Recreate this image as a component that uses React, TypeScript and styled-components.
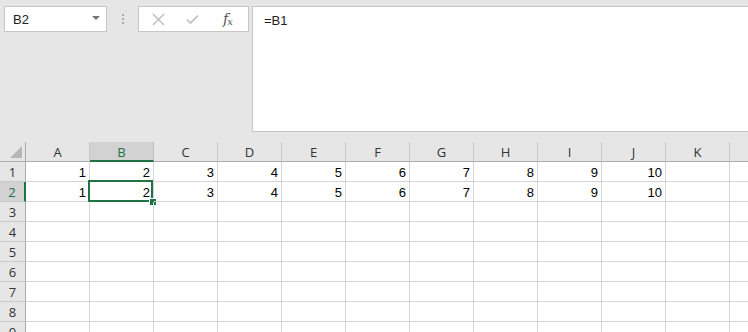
import React from 'react'
import styled, { createGlobalStyle } from 'styled-components'

const GREEN = '#217346'
const COLS = ['A', 'B', 'C', 'D', 'E', 'F', 'G', 'H', 'I', 'J', 'K', 'L']
const ROWS = 9
const data: Record<number, number[]> = {
    1: [1, 2, 3, 4, 5, 6, 7, 8, 9, 10],
    2: [1, 2, 3, 4, 5, 6, 7, 8, 9, 10],
}

const Global = createGlobalStyle`
    body {
        margin: 0;
        background: #fff;
        overflow: hidden;
        font-family: "Liberation Sans", Arial, sans-serif;
    }
`

const Page = styled.div`
    width: 748px;
    height: 332px;
    overflow: hidden;
    display: flex;
    flex-direction: column;
`

const Toolbar = styled.div`
    flex: 0 0 142px;
    background: #e6e6e6;
    display: flex;
    align-items: flex-start;
    padding: 6px 0 0 4px;
    box-sizing: border-box;
`

const NameBox = styled.div`
    width: 103px;
    height: 26px;
    box-sizing: border-box;
    background: #fff;
    border: 1px solid #c6c6c6;
    display: flex;
    align-items: center;
    justify-content: space-between;
    padding: 0 6px 0 8px;
    font-size: 13px;
    color: #222;
`

const Caret = styled.span`
    width: 0;
    height: 0;
    border-left: 4px solid transparent;
    border-right: 4px solid transparent;
    border-top: 4px solid #777;
    margin-top: -3px;
`

const Grip = styled.div`
    width: 31px;
    height: 26px;
    display: flex;
    flex-direction: column;
    align-items: center;
    justify-content: center;
    gap: 2px;
    & span {
        width: 2px;
        height: 2px;
        background: #ababab;
    }
`

const Buttons = styled.div`
    width: 111px;
    height: 26px;
    box-sizing: border-box;
    background: #fff;
    border: 1px solid #c6c6c6;
    display: flex;
    align-items: center;
    padding-left: 13px;
    gap: 21px;
`

const Fx = styled.span`
    font-family: "DejaVu Serif", "Liberation Serif", serif;
    font-style: italic;
    font-size: 14px;
    color: #555;
    margin-left: 3px;
    letter-spacing: -1px;
    & sub {
        font-size: 10px;
        vertical-align: -1px;
    }
`

const Formula = styled.div`
    flex: 1;
    height: 126px;
    margin-left: 3px;
    margin-right: -2px;
    box-sizing: border-box;
    background: #fff;
    border: 1px solid #c6c6c6;
    padding: 6px 0 0 11px;
    font-size: 13px;
    color: #222;
`

const Grid = styled.div`
    flex: 0 0 auto;
    display: grid;
    grid-template-columns: 26px repeat(${COLS.length}, 64px);
    grid-auto-rows: 20px;
    background: #fff;
`

const Corner = styled.div`
    background: #e6e6e6;
    border-right: 1px solid #ababab;
    border-bottom: 1px solid #ababab;
    box-sizing: border-box;
    position: relative;
    &::after {
        content: '';
        position: absolute;
        right: 3px;
        bottom: 3px;
        width: 0;
        height: 0;
        border-left: 12px solid transparent;
        border-bottom: 12px solid #b6b6b6;
    }
`

const ColHead = styled.div<{ $active?: boolean }>`
    background: ${p => (p.$active ? '#d2d2d2' : '#e6e6e6')};
    border-right: 1px solid ${p => (p.$active ? '#bdbdbd' : '#c9c9c9')};
    border-bottom: ${p => (p.$active ? `2px solid ${GREEN}` : '1px solid #ababab')};
    box-sizing: border-box;
    display: flex;
    align-items: center;
    justify-content: center;
    font-family: "Open Sans", "Liberation Sans", sans-serif;
    font-size: 13px;
    color: ${p => (p.$active ? GREEN : '#333')};
    padding-top: ${p => (p.$active ? '1px' : '0')};
`

const RowHead = styled.div<{ $active?: boolean }>`
    background: ${p => (p.$active ? '#d2d2d2' : '#e6e6e6')};
    border-right: ${p => (p.$active ? `2px solid ${GREEN}` : '1px solid #ababab')};
    border-bottom: 1px solid #c9c9c9;
    box-sizing: border-box;
    display: flex;
    align-items: center;
    justify-content: center;
    font-family: "Open Sans", "Liberation Sans", sans-serif;
    font-size: 13px;
    color: ${p => (p.$active ? GREEN : '#333')};
`

const Cell = styled.div`
    border-right: 1px solid #d4d4d4;
    border-bottom: 1px solid #d4d4d4;
    box-sizing: border-box;
    display: flex;
    align-items: center;
    justify-content: flex-end;
    padding: 1px 3px 0 0;
    font-size: 13px;
    color: #000;
    position: relative;
`

const Selection = styled.div`
    position: absolute;
    left: -2px;
    top: -2px;
    width: 65px;
    height: 22px;
    box-sizing: border-box;
    border: 2px solid ${GREEN};
    pointer-events: none;
    &::after {
        content: '';
        position: absolute;
        right: -5px;
        bottom: -5px;
        width: 6px;
        height: 6px;
        background: ${GREEN};
        border-top: 1px solid #fff;
        border-left: 1px solid #fff;
    }
`

const Cross = () => (
    <svg width="13" height="13" viewBox="0 0 13 13">
        <path d="M1 1 L12 12 M12 1 L1 12" stroke="#bdbdbd" strokeWidth="1.4" fill="none" />
    </svg>
)

const Check = () => (
    <svg width="13" height="11" viewBox="0 0 13 11">
        <path d="M1 5.5 L4.5 9 L12 1.5" stroke="#bdbdbd" strokeWidth="1.6" fill="none" />
    </svg>
)

const App = () => {
    const rows = []
    for (let r = 1; r <= ROWS; r++) {
        rows.push(<RowHead key={`h${r}`} $active={r === 2}>{r}</RowHead>)
        COLS.forEach((c, i) => {
            const value = data[r]?.[i]
            rows.push(
                <Cell key={`${c}${r}`}>
                    {value}
                    {r === 2 && c === 'B' && <Selection />}
                </Cell>
            )
        })
    }

    return (
        <Page>
            <Global />
            <Toolbar>
                <NameBox>
                    B2
                    <Caret />
                </NameBox>
                <Grip>
                    <span />
                    <span />
                    <span />
                </Grip>
                <Buttons>
                    <Cross />
                    <Check />
                    <Fx>
                        f<sub>x</sub>
                    </Fx>
                </Buttons>
                <Formula>=B1</Formula>
            </Toolbar>
            <Grid>
                <Corner />
                {COLS.map(c => (
                    <ColHead key={c} $active={c === 'B'}>{c !== 'L' && c}</ColHead>
                ))}
                {rows}
            </Grid>
        </Page>
    )
}

export default App
